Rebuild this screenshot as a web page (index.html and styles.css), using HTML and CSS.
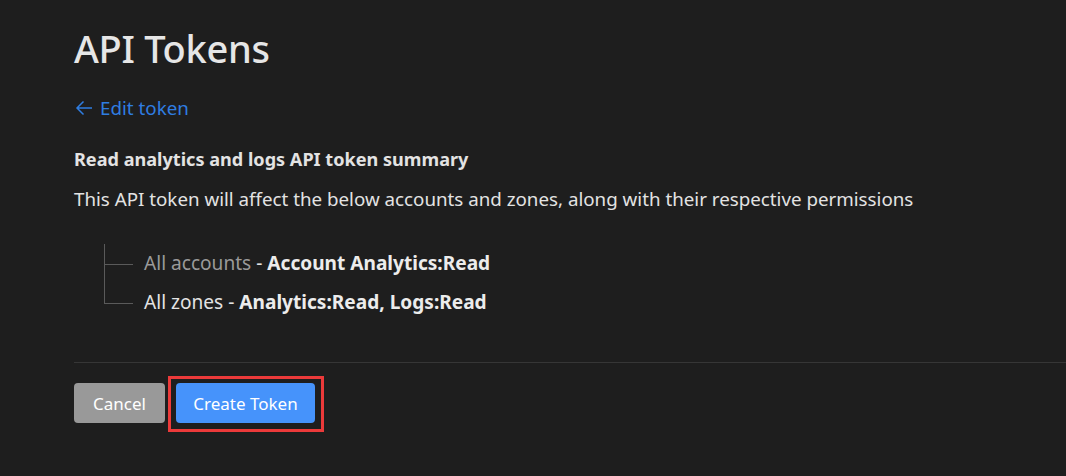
FILE: index.html
```html
<!DOCTYPE html>
<html lang="en">
<head>
<meta charset="utf-8">
<title>API Tokens</title>
<link rel="stylesheet" href="styles.css">
</head>
<body>
<main class="page">
  <h1 class="title">API Tokens</h1>
  <a class="back-link" href="#"><svg class="arrow" width="18" height="16" viewBox="0 0 18 16" aria-hidden="true"><path d="M17 8H2M8.5 1.5L2 8l6.5 6.5" fill="none" stroke="currentColor" stroke-width="1.5"/></svg>Edit token</a>
  <h2 class="summary-title">Read analytics and logs API token summary</h2>
  <p class="summary-desc">This API token will affect the below accounts and zones, along with their respective permissions</p>
  <ul class="tree">
    <li class="tree-item"><span class="muted">All accounts</span> - <strong>Account Analytics:Read</strong></li>
    <li class="tree-item">All zones - <strong>Analytics:Read, Logs:Read</strong></li>
  </ul>
  <hr class="divider">
  <div class="actions">
    <button class="btn btn-cancel" type="button">Cancel</button>
    <span class="highlight"><button class="btn btn-primary" type="button">Create Token</button></span>
  </div>
</main>
</body>
</html>
```

FILE: styles.css
```css
html, body {
  margin: 0;
  padding: 0;
  background: #1e1e1e;
  height: 100%;
}
body {
  font-family: "Noto Sans", "Open Sans", sans-serif;
  color: #e3e3e3;
}
.page {
  padding: 22px 0 0 74px;
}
.title {
  margin: 0;
  font-size: 38px;
  font-weight: 500;
  line-height: 52px;
  color: #e6e6e6;
  letter-spacing: -0.3px;
}
.back-link {
  display: inline-flex;
  align-items: center;
  gap: 7px;
  margin-top: 20px;
  color: #2f7de1;
  text-decoration: none;
  font-size: 18.8px;
  line-height: 28px;
}
.arrow {
  display: block;
  margin-left: 1px;
}
.summary-title {
  margin: 24px 0 0;
  font-size: 18.1px;
  font-weight: 700;
  line-height: 26px;
  color: #e3e3e3;
}
.summary-desc {
  margin: 14px 0 0;
  font-size: 18.75px;
  line-height: 26px;
  color: #e3e3e3;
}
.tree {
  list-style: none;
  margin: 32px 0 0 30px;
  padding: 0;
  position: relative;
}
.tree::before {
  content: "";
  position: absolute;
  left: 0;
  top: 0;
  height: 60px;
  border-left: 1px solid #5a5a5a;
}
.tree-item {
  position: relative;
  padding-left: 40px;
  font-size: 19.1px;
  line-height: 39px;
  white-space: nowrap;
}
.tree-item::before {
  content: "";
  position: absolute;
  left: 0;
  top: 20px;
  width: 29px;
  border-top: 1px solid #5a5a5a;
}
.tree-item:first-child { margin-top: 2px; }
.muted { color: #9a9a9a; }
.tree strong { font-weight: 700; color: #ececec; }
.divider {
  margin: 40px 0 0;
  border: 0;
  border-top: 1px solid #363636;
}
.actions {
  display: flex;
  align-items: flex-start;
  gap: 3px;
  margin-top: 13px;
}
.btn {
  font-family: "Noto Sans", sans-serif;
  font-size: 17px;
  height: 40px;
  border: 0;
  border-radius: 4px;
  color: #ffffff;
  padding: 0;
  white-space: nowrap;
  text-align: center;
  cursor: pointer;
}
.btn-cancel {
  background: #999999;
  width: 91px;
  margin-top: 7px;
}
.highlight {
  display: inline-flex;
  border: 3px solid #ec3a3a;
  padding: 4px 6px 6px 5px;
}
.btn-primary {
  background: #4693fb;
  width: 139px;
}
```
